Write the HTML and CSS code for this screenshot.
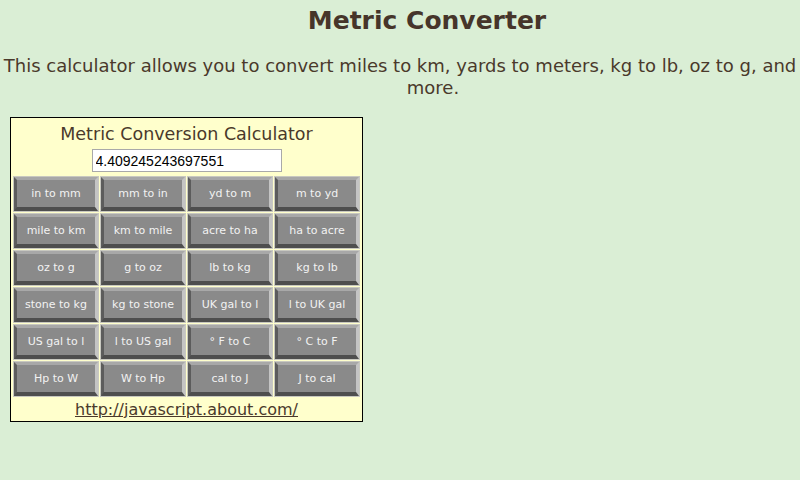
FILE: index.html
```html
<!DOCTYPE html>
<html lang="en">
<head>
<meta charset="utf-8">
<title>Metric Converter</title>
<link rel="stylesheet" href="styles.css">
</head>
<body>
<div class="page">
  <h1 class="title">Metric Converter</h1>
  <p class="intro">This calculator allows you to convert miles to km, yards to meters, kg to lb, oz to g, and more.</p>
  <div class="calc">
    <div class="calc-title">Metric Conversion Calculator</div>
    <div class="calc-input-row"><input class="calc-input" type="text" value="4.409245243697551"></div>
    <div class="calc-grid">
      <div class="cell"><button class="btn">in to mm</button></div>
      <div class="cell"><button class="btn">mm to in</button></div>
      <div class="cell"><button class="btn">yd to m</button></div>
      <div class="cell"><button class="btn">m to yd</button></div>
      <div class="cell"><button class="btn">mile to km</button></div>
      <div class="cell"><button class="btn">km to mile</button></div>
      <div class="cell"><button class="btn">acre to ha</button></div>
      <div class="cell"><button class="btn">ha to acre</button></div>
      <div class="cell"><button class="btn">oz to g</button></div>
      <div class="cell"><button class="btn">g to oz</button></div>
      <div class="cell"><button class="btn">lb to kg</button></div>
      <div class="cell"><button class="btn">kg to lb</button></div>
      <div class="cell"><button class="btn">stone to kg</button></div>
      <div class="cell"><button class="btn">kg to stone</button></div>
      <div class="cell"><button class="btn">UK gal to l</button></div>
      <div class="cell"><button class="btn">l to UK gal</button></div>
      <div class="cell"><button class="btn">US gal to l</button></div>
      <div class="cell"><button class="btn">l to US gal</button></div>
      <div class="cell"><button class="btn">&deg; F to C</button></div>
      <div class="cell"><button class="btn">&deg; C to F</button></div>
      <div class="cell"><button class="btn">Hp to W</button></div>
      <div class="cell"><button class="btn">W to Hp</button></div>
      <div class="cell"><button class="btn">cal to J</button></div>
      <div class="cell"><button class="btn">J to cal</button></div>
    </div>
    <div class="calc-link-row"><a class="calc-link" href="#">http://javascript.about.com/</a></div>
  </div>
</div>
</body>
</html>
```

FILE: styles.css
```css
html, body {
  margin: 0;
  padding: 0;
  background: #daeed5;
}

body {
  font-family: "DejaVu Sans", Verdana, sans-serif;
  color: #4a392b;
}

.page {
  width: 800px;
}

.title {
  margin: 0;
  padding: 6px 0 0 54px;
  font-size: 25px;
  line-height: 30px;
  font-weight: bold;
  text-align: center;
  color: #46352a;
}

.intro {
  margin: 19px 0 0 0;
  padding-left: 66px;
  text-indent: -66px;
  font-size: 18px;
  line-height: 22px;
  text-align: center;
}

.calc {
  margin: 18px 0 0 10px;
  width: 351px;
  border: 1px solid #000;
  background: #ffffcc;
  text-align: center;
}

.calc-title {
  padding-top: 6px;
  font-size: 17.5px;
  line-height: 20px;
}

.calc-input-row {
  margin-top: 5px;
  display: flex;
  justify-content: center;
}

.calc-input {
  box-sizing: border-box;
  width: 190px;
  height: 23px;
  margin: 0;
  padding: 0 3px;
  border: 1px solid #a9a9a9;
  background: #fff;
  font-family: "Liberation Sans", Arial, sans-serif;
  font-size: 14px;
  color: #000;
}

.calc-grid {
  margin-top: 4px;
  display: grid;
  grid-template-columns: repeat(4, 86px);
  grid-auto-rows: 36px;
  gap: 1px;
  justify-content: center;
}

.cell {
  box-sizing: border-box;
  border: 1px solid #c8c8c0;
  display: flex;
}

.btn {
  box-sizing: border-box;
  flex: 1;
  margin: 0;
  padding: 0;
  border-style: solid;
  border-width: 3px 3px 4px 3px;
  border-color: #a8a8a8 #c4c4c4 #4e4e4e #5c5c5c;
  background: #8a8a8a;
  color: #f2f2f2;
  font-family: "DejaVu Sans", sans-serif;
  font-size: 11px;
  cursor: pointer;
}

.calc-link-row {
  padding: 3px 0 1px;
  line-height: 20px;
}

.calc-link {
  font-size: 16px;
  color: #4a392b;
  text-decoration: underline;
}
```
